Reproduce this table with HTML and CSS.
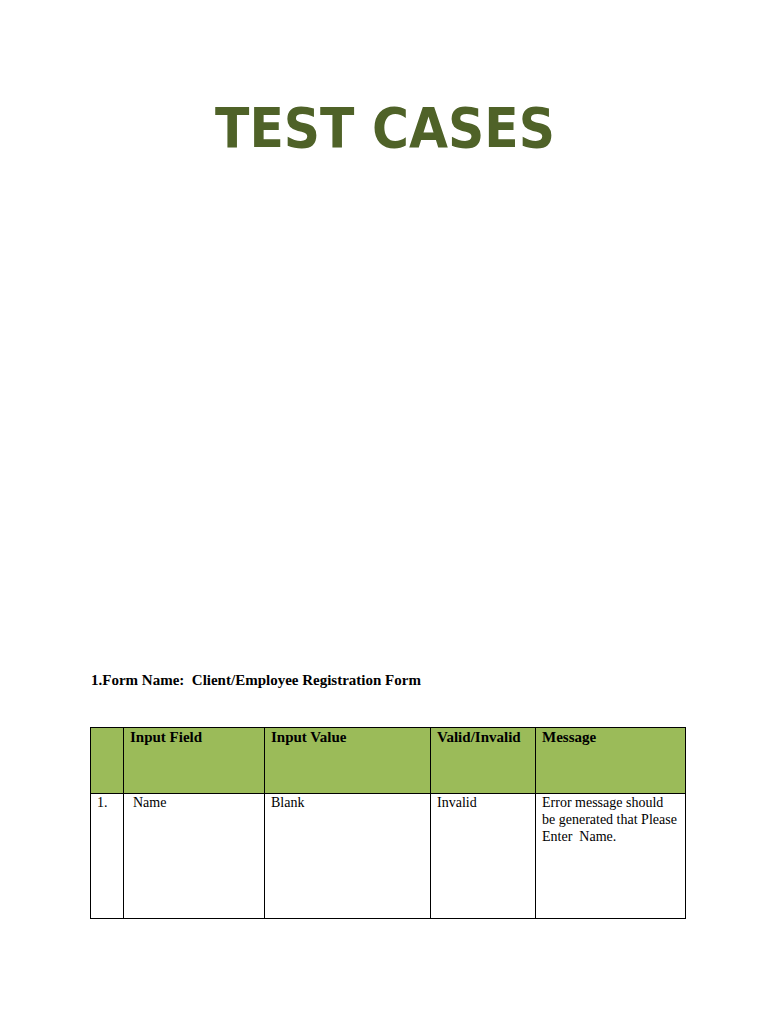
FILE: index.html
```html
<!DOCTYPE html>
<html>
<head>
<meta charset="utf-8">
<link rel="stylesheet" href="styles.css">
</head>
<body>
<div class="page">
  <h1 class="title">TEST CASES</h1>
  <p class="form-name">1.Form Name:&nbsp; Client/Employee Registration Form</p>
  <table class="cases">
    <colgroup>
      <col class="c1"><col class="c2"><col class="c3"><col class="c4"><col class="c5">
    </colgroup>
    <thead>
      <tr>
        <th></th>
        <th>Input Field</th>
        <th>Input Value</th>
        <th>Valid/Invalid</th>
        <th>Message</th>
      </tr>
    </thead>
    <tbody>
      <tr>
        <td class="num">1.</td>
        <td class="field">Name</td>
        <td>Blank</td>
        <td>Invalid</td>
        <td>Error message should be generated that Please Enter&nbsp; Name.</td>
      </tr>
    </tbody>
  </table>
</div>
</body>
</html>
```

FILE: styles.css
```css
html, body {
  margin: 0;
  padding: 0;
  background: #ffffff;
}
.page {
  width: 768px;
  height: 1024px;
  font-family: "Liberation Serif", "Times New Roman", serif;
  color: #000;
  padding-top: 92px;
  box-sizing: border-box;
}
.title {
  margin: 0;
  text-align: center;
  font-family: "DejaVu Sans Condensed", "DejaVu Sans", sans-serif;
  font-stretch: condensed;
  font-weight: bold;
  font-size: 56px;
  line-height: 72px;
  color: #4f6228;
  padding-left: 2px;
}
.form-name {
  margin: 507px 0 0 91px;
  font-weight: bold;
  font-size: 15px;
  line-height: 18px;
}
.cases {
  margin: 38px 0 0 90px;
  border-collapse: collapse;
  width: 596px;
  font-size: 14px;
}
.c1 { width: 33px; }
.c2 { width: 141px; }
.c3 { width: 166px; }
.c4 { width: 105px; }
.c5 { width: 150px; }
.cases th, .cases td {
  border: 1px solid #000;
  vertical-align: top;
  text-align: left;
  padding: 1px 6px 0 6px;
  line-height: 17px;
}
.cases th {
  background: #9bbb59;
  height: 64px;
  font-weight: bold;
  font-size: 15px;
}
.cases td {
  height: 124px;
  padding-top: 0;
}
.cases td.field {
  padding-left: 9px;
}
```
